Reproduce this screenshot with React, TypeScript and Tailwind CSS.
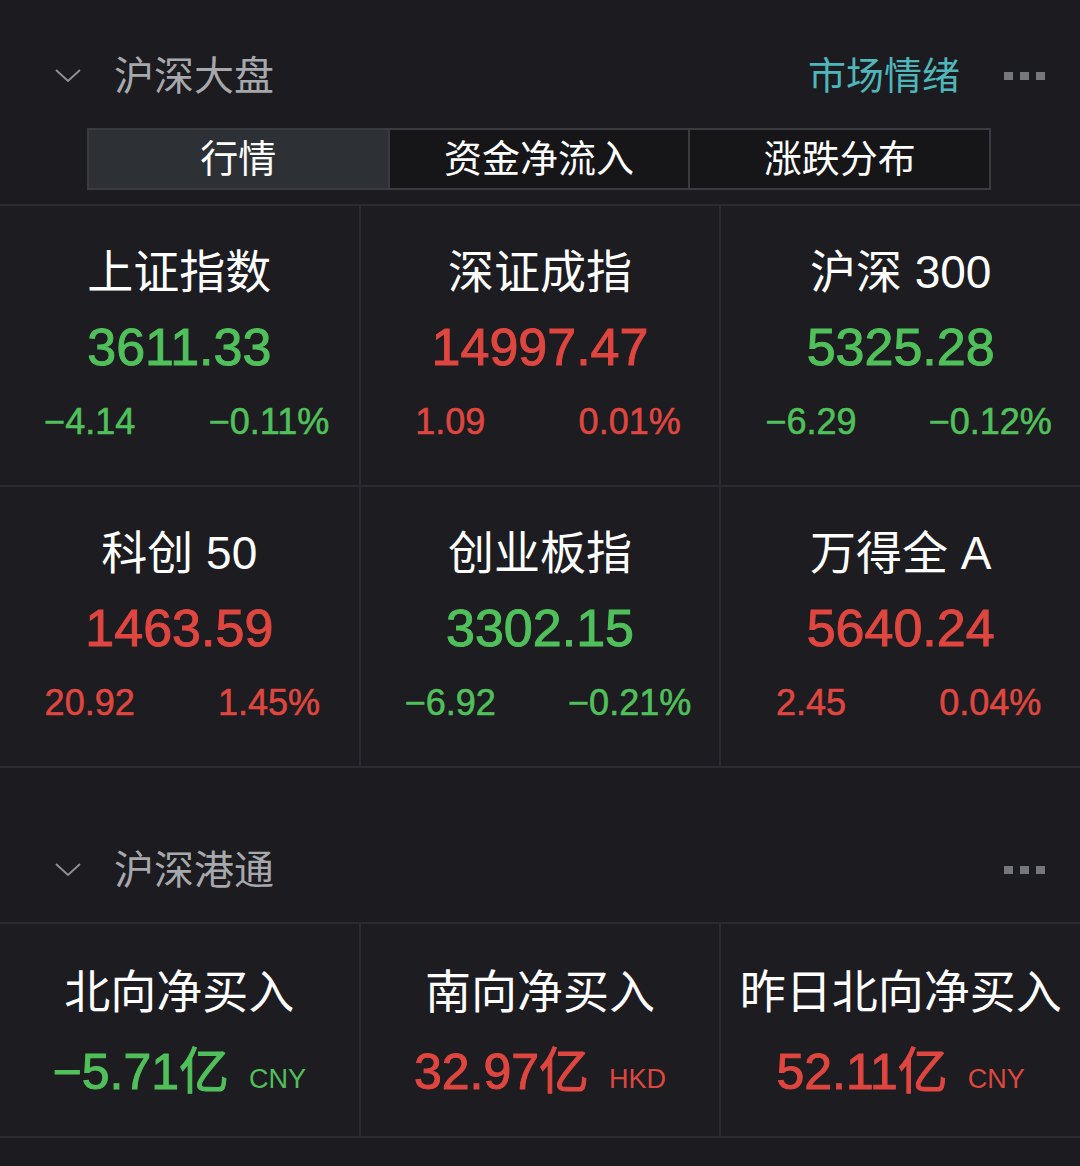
import React from 'react';

const font = { fontFamily: '"Liberation Sans", "Noto Sans CJK SC", sans-serif' };

type Quote = { name: string; value: string; change: string; pct: string; up: boolean };

const quotes: Quote[] = [
  { name: '上证指数', value: '3611.33', change: '−4.14', pct: '−0.11%', up: false },
  { name: '深证成指', value: '14997.47', change: '1.09', pct: '0.01%', up: true },
  { name: '沪深 300', value: '5325.28', change: '−6.29', pct: '−0.12%', up: false },
  { name: '科创 50', value: '1463.59', change: '20.92', pct: '1.45%', up: true },
  { name: '创业板指', value: '3302.15', change: '−6.92', pct: '−0.21%', up: false },
  { name: '万得全 A', value: '5640.24', change: '2.45', pct: '0.04%', up: true },
];

const flows = [
  { name: '北向净买入', value: '−5.71亿', unit: 'CNY', up: false },
  { name: '南向净买入', value: '32.97亿', unit: 'HKD', up: true },
  { name: '昨日北向净买入', value: '52.11亿', unit: 'CNY', up: true },
];

const tabs = ['行情', '资金净流入', '涨跌分布'];

const Chevron = () => (
  <svg width="28" height="16" viewBox="0 0 28 16" className="shrink-0">
    <path d="M2 2 L14 13 L26 2" fill="none" stroke="#8e8f94" strokeWidth="2" />
  </svg>
);

const Dots = () => (
  <div className="flex gap-[7px]">
    <span className="block w-[9px] h-[8px] bg-[#76777c]" />
    <span className="block w-[9px] h-[8px] bg-[#76777c]" />
    <span className="block w-[9px] h-[8px] bg-[#76777c]" />
  </div>
);

const SectionHeader: React.FC<{ title: string; extra?: string }> = ({ title, extra }) => (
  <div className="flex items-center h-[104px] pl-[54px] pr-[35px]">
    <Chevron />
    <span className="ml-[32px] text-[40px] leading-none text-[#a7a8ac]">{title}</span>
    <div className="ml-auto flex items-center">
      {extra && <span className="text-[38px] leading-none text-[#4fb6ba] mr-[44px]">{extra}</span>}
      <Dots />
    </div>
  </div>
);

export default function App() {
  return (
    <div className="w-[1080px] h-[1166px] bg-[#1b1b20] overflow-hidden" style={font}>
      {/* 沪深大盘 */}
      <div className="pt-[24px]">
        <SectionHeader title="沪深大盘" extra="市场情绪" />
      </div>

      <div className="ml-[87px] w-[904px] h-[62px] flex border-2 border-[#3a3b40]">
        {tabs.map((t, i) => (
          <div
            key={t}
            className={`flex-1 flex items-center justify-center text-[38px] leading-none text-white ${
              i === 0 ? 'bg-[#2d3136]' : 'bg-[#161619]'
            } ${i > 0 ? 'border-l-2 border-[#3a3b40]' : ''}`}
          >
            {t}
          </div>
        ))}
      </div>

      <div className="mt-[14px] grid grid-cols-3 gap-[2px] bg-[#2b2c31] py-[2px]">
        {quotes.map((q) => {
          const color = q.up ? 'text-[#df463f]' : 'text-[#50c05a]';
          return (
            <div key={q.name} className="bg-[#1c1c21] h-[279px] flex flex-col pt-[41px] gap-[25px]">
              <div className="h-[50px] flex items-center justify-center text-[46px] leading-none text-white">
                {q.name}
              </div>
              <div
                className={`h-[50px] flex items-center justify-center text-[52px] leading-none [-webkit-text-stroke:1px_currentColor] ${color}`}
              >
                {q.value}
              </div>
              <div
                className={`h-[50px] grid grid-cols-2 items-center text-[36px] leading-none [-webkit-text-stroke:0.6px_currentColor] ${color}`}
              >
                <span className="text-center">{q.change}</span>
                <span className="text-center">{q.pct}</span>
              </div>
            </div>
          );
        })}
      </div>

      {/* 沪深港通 */}
      <div className="pt-[50px]">
        <SectionHeader title="沪深港通" />
      </div>

      <div className="grid grid-cols-3 gap-[2px] bg-[#2b2c31] py-[2px]">
        {flows.map((f) => {
          const color = f.up ? 'text-[#df463f]' : 'text-[#50c05a]';
          return (
            <div key={f.name} className="bg-[#1c1c21] h-[212px] flex flex-col pt-[43px] gap-[30px]">
              <div className="h-[50px] flex items-center justify-center text-[46px] leading-none text-white">
                {f.name}
              </div>
              <div className={`h-[50px] flex items-end justify-center leading-none ${color}`}>
                <span className="text-[50px] [-webkit-text-stroke:1px_currentColor]">{f.value}</span>
                <span className="text-[27px] ml-[20px] mb-[4px]">{f.unit}</span>
              </div>
            </div>
          );
        })}
      </div>
    </div>
  );
}
